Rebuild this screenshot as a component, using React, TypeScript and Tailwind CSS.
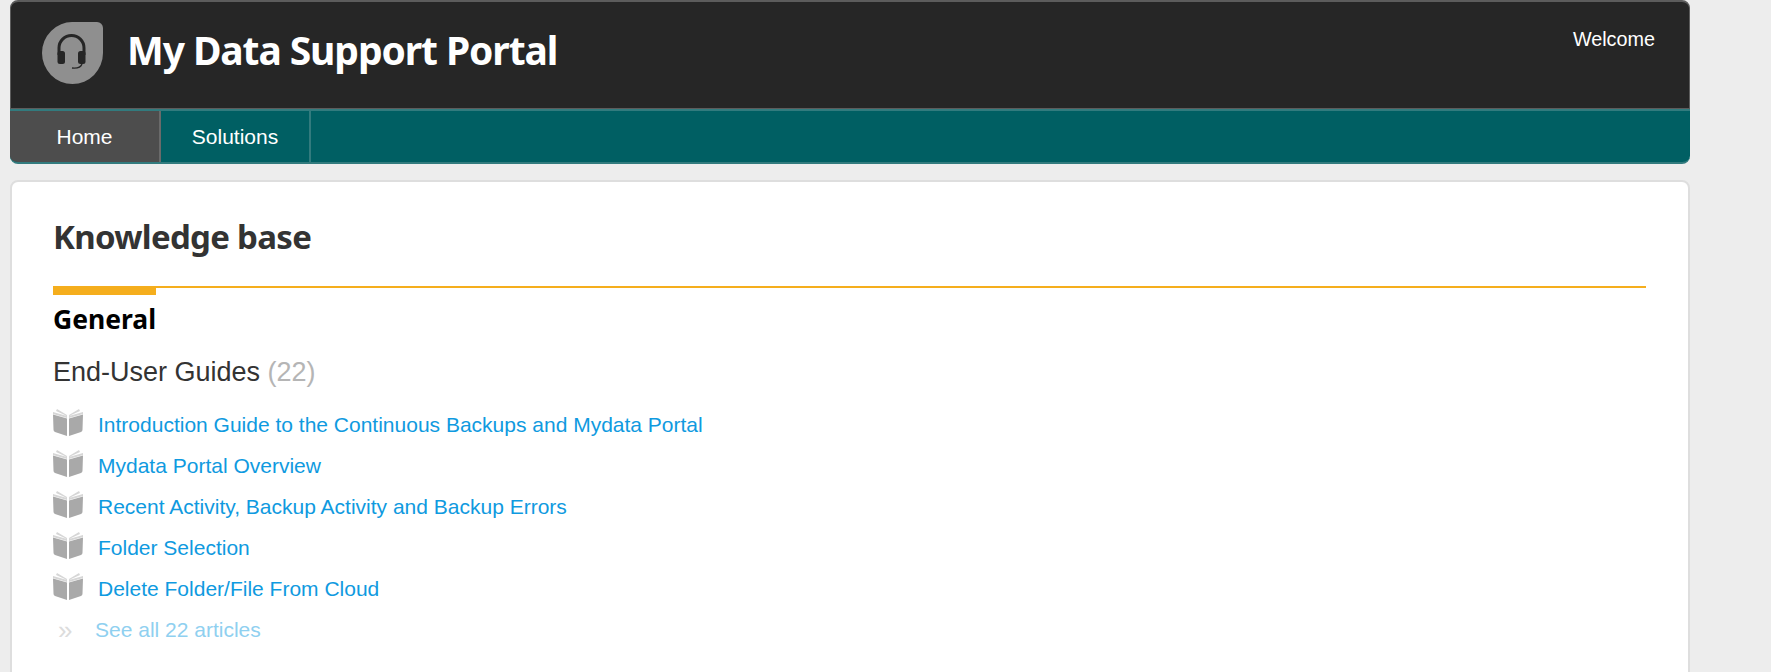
const articles = [
  "Introduction Guide to the Continuous Backups and Mydata Portal",
  "Mydata Portal Overview",
  "Recent Activity, Backup Activity and Backup Errors",
  "Folder Selection",
  "Delete Folder/File From Cloud",
];

const Logo = () => (
  <svg width="62" height="62" viewBox="0 0 62 62" className="shrink-0">
    <path d="M31 0H55a6 6 0 0 1 6 6V31A30.5 31 0 0 1 0 31 30.5 31 0 0 1 31 0Z" fill="#8f8f8f" />
    <path d="M17 33V26a12.500 12.500 0 0 1 25 0V33" fill="none" stroke="#262626" strokeWidth="3" />
    <rect x="15.500" y="29" width="7.500" height="13" rx="2.500" fill="#262626" />
    <rect x="36" y="29" width="7.500" height="13" rx="2.500" fill="#262626" />
    <path d="M40 42c-1 3-5 4.500-10 4" fill="none" stroke="#262626" strokeWidth="1.300" />
  </svg>
);

const BookIcon = () => (
  <svg width="30" height="28" viewBox="0 0 30 28" className="shrink-0 mb-[2px]">
    <path d="M0 3 14 7 14 9 0 5Z M30 3 16 7 16 9 30 5Z M4 0 14 6 14 7 3 2Z M26 0 16 6 16 7 27 2Z" fill="#d6d6d6" />
    <path d="M0 5.500 14 9.500V27L2 23C1 22.500 0.500 21.500 0.500 20.500Z" fill="#a9a9a9" />
    <path d="M30 5.500 16 9.500V27L28 23C29 22.500 29.500 21.500 29.500 20.500Z" fill="#a9a9a9" />
  </svg>
);

export default function App() {
  return (
    <div className="h-screen overflow-hidden bg-[#ededed] pl-[10px] font-['Liberation_Sans',Arial,sans-serif]">
      <div className="w-[1680px]">
        <header className="h-[109px] flex justify-between rounded-t-lg border-t-2 border-x border-b border-[#5c5c5c] bg-[#262626] text-white">
          <div className="flex items-start pl-[31px] pt-[20px] gap-[23px]">
            <Logo />
            <h1 className="font-['Noto_Sans',sans-serif] font-bold text-[39px] tracking-[-1.100px] leading-[50px] mt-[3px]">My Data Support Portal</h1>
          </div>
          <div className="pr-[34px] pt-[24px] text-[19.800px] leading-[26px]">Welcome</div>
        </header>
        <nav className="flex h-[55px] rounded-b-lg border-y-2 border-[#327b7e] bg-[#005f63] overflow-hidden text-white text-[21px]">
          <a className="w-[151px] flex items-center justify-center bg-[#4d4d4d] border-r-2 border-[#6a6a6a]">Home</a>
          <a className="w-[150px] flex items-center justify-center border-r-2 border-[#327b7e]">Solutions</a>
        </nav>

        <main className="mt-[16px] h-[600px] rounded-lg border-2 border-[#dedede] bg-white pl-[41px] pr-[42px] pt-[33px]">
          <h2 className="font-['Noto_Sans',sans-serif] font-bold text-[33px] tracking-[-0.700px] leading-[44px] text-[#333333]">Knowledge base</h2>
          <div className="mt-[27px] h-[2px] bg-[#f5ae1d]">
            <div className="h-[9px] w-[103px] bg-[#f5ae1d]" />
          </div>
          <h3 className="mt-[14px] font-['Noto_Sans',sans-serif] font-bold text-[26.500px] leading-[34px] text-black">General</h3>
          <p className="mt-[18px] text-[27px] leading-[36px] text-[#333333]">
            End-User Guides <span className="text-[#b5b5b5]">(22)</span>
          </p>
          <ul className="mt-[13px] flex flex-col">
            {articles.map((title) => (
              <li key={title} className="h-[41px] flex items-center gap-[15px]">
                <BookIcon />
                <a className="text-[21px] text-[#0f9ae0] mt-[2px]">{title}</a>
              </li>
            ))}
          </ul>
          <div className="flex items-center h-[41px] mt-[1px] text-[21px] text-[#8fd0f0]">
            <span className="w-[42px] pl-[5px] text-[#dcdcdc] text-[26px] leading-none">»</span>
            See all 22 articles
          </div>
        </main>
      </div>
    </div>
  );
}
